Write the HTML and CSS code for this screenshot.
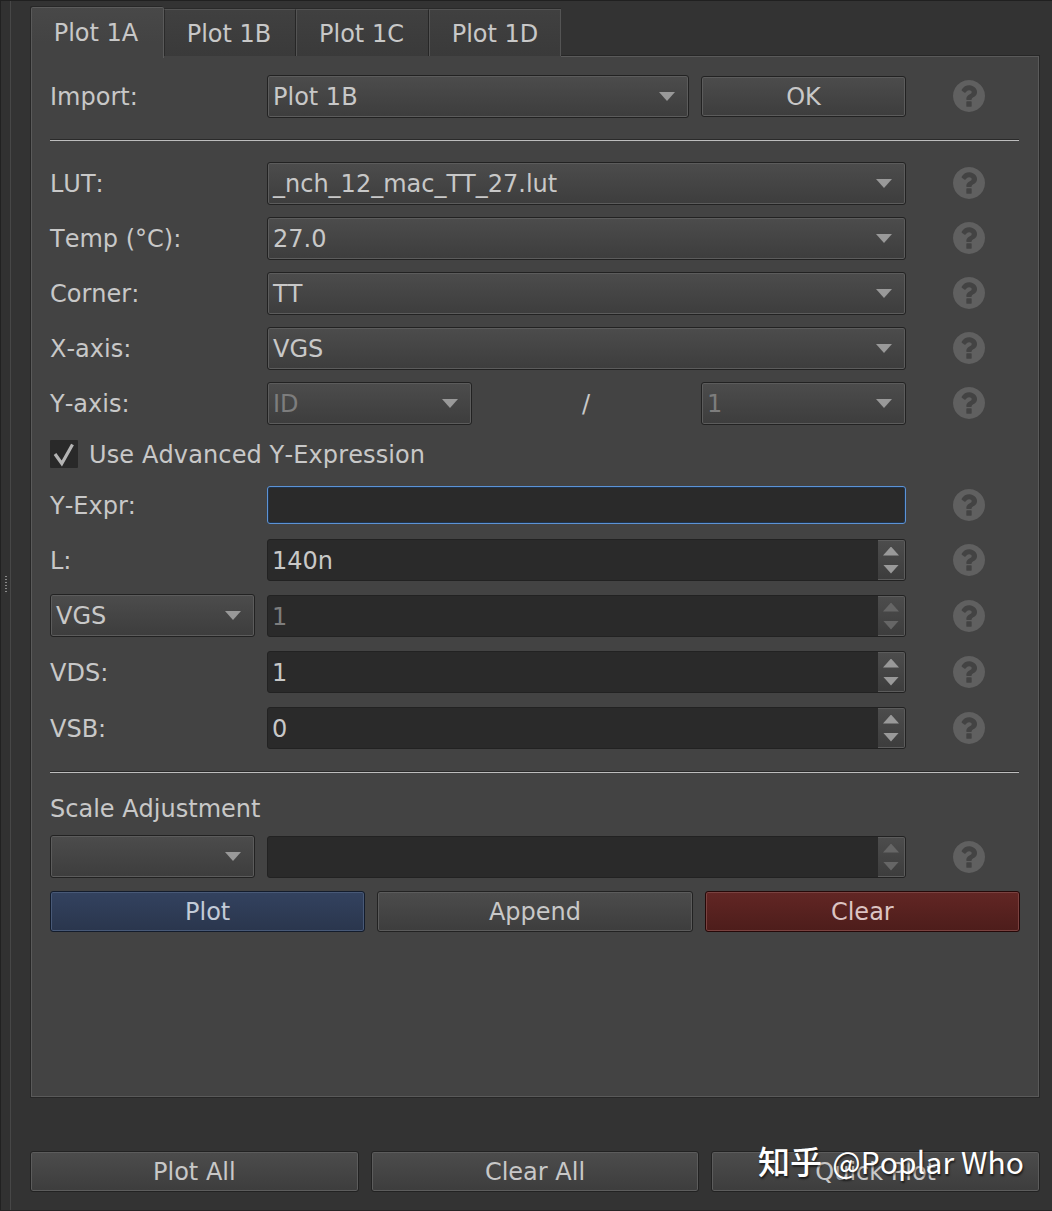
FILE: index.html
```html
<!DOCTYPE html>
<html lang="en">
<head>
    <meta charset="UTF-8">
    <meta name="viewport" content="width=device-width, initial-scale=1.0">
    <title>Plot Settings</title>
    <link rel="stylesheet" href="styles.css">
</head>
<body>

<svg class="defs">
    <symbol id="help" viewBox="0 0 1536 1536">
        <path d="M896 1248v-192q0-14-9-23t-23-9h-192q-14 0-23 9t-9 23v192q0 14 9 23t23 9h192q14 0 23-9t9-23zm256-672q0-88-55.500-163t-138.500-116-170-41q-243 0-371 213-15 24 8 42l132 100q7 6 19 6 16 0 25-12 53-68 86-92 34-24 86-24 48 0 85.500 26t37.500 59q0 38-20 61t-68 45q-63 28-115.500 86.500t-52.500 125.500v36q0 14 9 23t23 9h192q14 0 23-9t9-23q0-19 21.500-49.500t54.500-49.500q32-18 49-28.500t46-35 44.500-48 28-60.500 12.500-81zm384 192q0 209-103 385.500t-279.500 279.500-385.500 103-385.500-103-279.500-279.500-103-385.500 103-385.500 279.500-279.500 385.500-103 385.500 103 279.500 279.500 103 385.500z"/>
    </symbol>
</svg>

<div class="window">
    <div class="splitter"><span class="grip"></span></div>

    <div class="main">
        <div class="tabs">
            <div class="tab active">Plot 1A</div>
            <div class="tab">Plot 1B</div>
            <div class="tab">Plot 1C</div>
            <div class="tab last">Plot 1D</div>
        </div>

        <div class="panel">
            <div class="row">
                <label>Import:</label>
                <div class="combo span2">Plot 1B</div>
                <button class="btn">OK</button>
                <svg class="help"><use href="#help"/></svg>
            </div>

            <div class="line"></div>

            <div class="row">
                <label>LUT:</label>
                <div class="combo span3">_nch_12_mac_TT_27.lut</div>
                <svg class="help"><use href="#help"/></svg>
            </div>
            <div class="row">
                <label>Temp (°C):</label>
                <div class="combo span3">27.0</div>
                <svg class="help"><use href="#help"/></svg>
            </div>
            <div class="row">
                <label>Corner:</label>
                <div class="combo span3">TT</div>
                <svg class="help"><use href="#help"/></svg>
            </div>
            <div class="row">
                <label>X-axis:</label>
                <div class="combo span3">VGS</div>
                <svg class="help"><use href="#help"/></svg>
            </div>
            <div class="row">
                <label>Y-axis:</label>
                <div class="combo disabled">ID</div>
                <span class="slash">/</span>
                <div class="combo disabled">1</div>
                <svg class="help"><use href="#help"/></svg>
            </div>

            <div class="check-row">
                <span class="checkbox">
                    <svg viewBox="0 0 28 28"><path d="M5 14L11.800 23.500L22.500 4.500"/></svg>
                </span>
                <label>Use Advanced Y-Expression</label>
            </div>

            <div class="row row-expr">
                <label>Y-Expr:</label>
                <div class="field span3"></div>
                <svg class="help"><use href="#help"/></svg>
            </div>
            <div class="row row-spin row-first">
                <label>L:</label>
                <div class="spin span3"><span>140n</span><div class="arrows"><i class="up"></i><i class="down"></i></div></div>
                <svg class="help"><use href="#help"/></svg>
            </div>
            <div class="row row-mixed">
                <div class="combo">VGS</div>
                <div class="spin span3 disabled"><span>1</span><div class="arrows"><i class="up"></i><i class="down"></i></div></div>
                <svg class="help"><use href="#help"/></svg>
            </div>
            <div class="row row-spin">
                <label>VDS:</label>
                <div class="spin span3"><span>1</span><div class="arrows"><i class="up"></i><i class="down"></i></div></div>
                <svg class="help"><use href="#help"/></svg>
            </div>
            <div class="row row-spin">
                <label>VSB:</label>
                <div class="spin span3"><span>0</span><div class="arrows"><i class="up"></i><i class="down"></i></div></div>
                <svg class="help"><use href="#help"/></svg>
            </div>

            <div class="line line-scale"></div>

            <div class="heading">Scale Adjustment</div>
            <div class="row row-mixed row-scale">
                <div class="combo"></div>
                <div class="spin span3 disabled"><span></span><div class="arrows"><i class="up"></i><i class="down"></i></div></div>
                <svg class="help"><use href="#help"/></svg>
            </div>

            <div class="buttons">
                <button class="btn blue">Plot</button>
                <button class="btn">Append</button>
                <button class="btn red">Clear</button>
            </div>
        </div>

        <div class="footer">
            <button class="btn">Plot All</button>
            <button class="btn">Clear All</button>
            <button class="btn">Quick Plot</button>
        </div>
    </div>

    <div class="watermark">知乎 <span>@Poplar Who</span></div>
</div>

</body>
</html>
```
FILE: styles.css
```css
* {
    margin: 0;
    padding: 0;
    box-sizing: border-box;
}

body {
    background: #333;
    color: #c8c8c8;
    font-family: "DejaVu Sans", sans-serif;
    font-size: 24px;
    font-kerning: none;
    line-height: 28px;
}

.defs {
    display: none;
}

.window {
    position: relative;
    display: flex;
    width: 1052px;
    height: 1211px;
    border-top: 1px solid #202020;
    border-bottom: 1px solid #262626;
    overflow: hidden;
}

/* splitter handle */
.splitter {
    display: flex;
    align-items: center;
    justify-content: center;
    width: 11px;
    padding-bottom: 41px;
    background: #313131;
    border-left: 1px solid #212121;
    border-right: 1px solid #474747;
}

.grip {
    width: 2px;
    height: 18px;
    background: repeating-linear-gradient(#8a8a8a 0 1px, #333 1px 3px);
}

.main {
    flex: 1;
    padding: 6px 12px 0 19px;
}

/* tabs */
.tabs {
    position: relative;
    z-index: 1;
    display: flex;
    align-items: flex-start;
    height: 48px;
    padding-left: 1px;
}

.tab {
    height: 47px;
    margin-top: 2px;
    width: 133px;
    padding-top: 10px;
    padding-right: 2px;
    text-align: center;
    background: linear-gradient(#404040, #3a3a3a);
    border-top: 1px solid #545454;
    border-right: 1px solid #262626;
    border-left: 1px solid #545454;
    box-shadow: 0 -1px 0 #292929, 0 1px 0 #434343;
}

.tab.active {
    position: relative;
    z-index: 1;
    width: 133px;
    height: 51px;
    margin-top: 0;
    padding-top: 11px;
    padding-right: 3px;
    background: linear-gradient(#484848, #434343 70%);
    border-right: 1px solid #5a5a5a;
    border-left: 1px solid #5a5a5a;
    border-top: 1px solid #5c5c5c;
    border-radius: 2px 2px 0 0;
    box-shadow: -1px -1px 0 #272727;
}

.tab.active + .tab {
    width: 132px;
    border-left: 1px solid #2a2a2a;
}

.tab.last {
    width: 132px;
    padding-right: 0;
    border-right: 1px solid #545454;
}

/* panel */
.panel {
    height: 1043px;
    padding: 19px 19px 0;
    background: #434343;
    border: 1px solid #272727;
    box-shadow: inset 0 0 0 1px #5a5a5a;
}

.row {
    display: grid;
    grid-template-columns: 205px 205px 205px 205px 102px;
    column-gap: 12px;
    align-items: center;
    height: 43px;
    margin-bottom: 12px;
}

.span2 {
    grid-column: span 2;
}

.span3 {
    grid-column: span 3;
}

.line {
    height: 2px;
    width: 969px;
    margin: 21px 0;
    background: #bdbdbd;
    border-top: 1px solid #2a2a2a;
}

.row:first-child {
    margin-bottom: 0;
}

.help {
    width: 32px;
    height: 32px;
    justify-self: center;
    margin-bottom: 1px;
    fill: #606060;
}

.combo,
.btn {
    background: linear-gradient(#4c4c4c, #3d3d3d);
    border: 1px solid #222;
    border-radius: 3px;
    box-shadow: inset 0 0 0 1px #5c5c5c;
    color: #c8c8c8;
}

.combo {
    display: flex;
    align-items: center;
    justify-content: space-between;
    height: 43px;
    padding: 0 13px 0 5px;
}

.combo::after {
    content: "";
    width: 16px;
    height: 9px;
    margin-left: auto;
    background: #999;
    clip-path: polygon(0 0, 100% 0, 50% 100%);
}

.btn {
    height: 41px;
    font: inherit;
    font-kerning: none;
    text-align: center;
}

.combo.disabled,
.disabled {
    color: #7d7d7d;
}

.slash {
    padding-right: 1px;
    text-align: center;
}

/* advanced expression */
.check-row {
    display: flex;
    align-items: center;
    height: 34px;
}

.check-row label {
    letter-spacing: 0.12px;
}

.check-row label,
.row-expr label,
.row-spin label,
.spin span {
    padding-top: 2px;
}

.checkbox {
    width: 28px;
    height: 28px;
    margin-right: 11px;
    background: #292929;
    border-radius: 1px;
}

.checkbox svg {
    display: block;
    fill: none;
    stroke: #b4b4b4;
    stroke-width: 3.2;
}

.row-expr {
    height: 38px;
    margin: 15px 0;
}

.field {
    height: 38px;
    background: #2a2a2a;
    border: 1px solid #5c93d6;
    border-radius: 3px;
    box-shadow: inset 0 0 0 1px #20344d;
}

/* spin boxes */
.row-spin {
    height: 42px;
    margin-bottom: 14px;
}

.row-first {
    margin-bottom: 13px;
}

.row-mixed {
    align-items: end;
    margin-bottom: 14px;
}

.row-mixed .help {
    margin-bottom: 5px;
}

.spin {
    display: flex;
    justify-content: space-between;
    align-items: center;
    height: 42px;
    padding-left: 4px;
    background: #2a2a2a;
    border: 1px solid #222;
    border-radius: 3px;
}

.arrows {
    display: flex;
    flex-direction: column;
    align-items: center;
    justify-content: center;
    gap: 9px;
    width: 27px;
    height: 40px;
    background: linear-gradient(#4c4c4c, #3d3d3d);
    border: 1px solid #5c5c5c;
    border-left: 0;
    border-radius: 0 2px 2px 0;
}

.arrows i {
    width: 16px;
    height: 9px;
    background: #999;
}

.spin.disabled i {
    background: #666;
}

.up {
    clip-path: polygon(50% 0, 100% 100%, 0 100%);
}

.down {
    clip-path: polygon(0 0, 100% 0, 50% 100%);
}

.line-scale {
    margin: 22px 0;
}

.heading {
    height: 28px;
}

.row-scale {
    margin: 12px 0 13px;
}

.buttons,
.footer {
    display: grid;
    grid-template-columns: repeat(3, 1fr);
    gap: 12px;
}

.btn.blue {
    background: linear-gradient(#33425f, #2a364d);
    border-color: #131c2c;
    box-shadow: inset 0 0 0 1px #485977;
    color: #c3cbd8;
}

.btn.red {
    background: linear-gradient(#622624, #4d1d1b);
    border-color: #260808;
    box-shadow: inset 0 0 0 1px #7a4240;
    color: #dcc4c3;
}

.footer {
    margin-top: 53px;
}

.watermark {
    position: absolute;
    right: 28px;
    bottom: 27px;
    color: #fff;
    font-family: "Noto Sans CJK SC", sans-serif;
    font-size: 32px;
    font-weight: 500;
    line-height: 44px;
    white-space: nowrap;
    text-shadow: 1px 2px 2px rgba(0, 0, 0, 0.6);
}

.watermark span {
    margin-left: 3px;
    font-size: 30px;
    font-weight: 400;
    letter-spacing: 0.1px;
}
```
